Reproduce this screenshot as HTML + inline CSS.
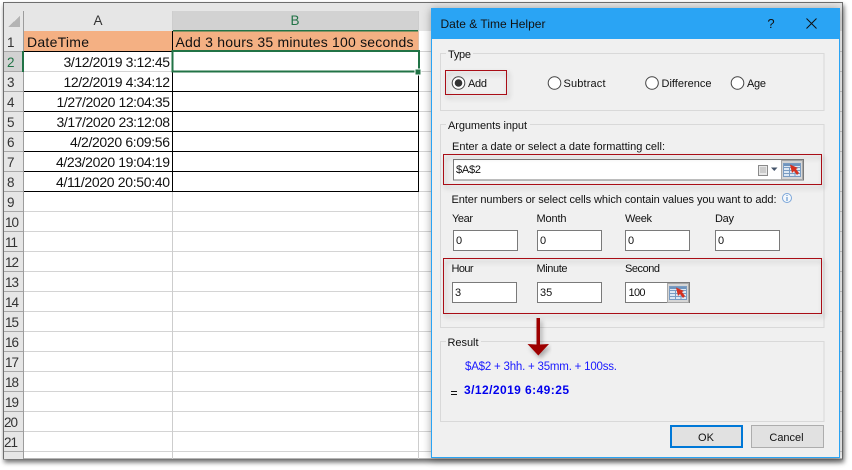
<!DOCTYPE html>
<html><head><meta charset="utf-8"><title>Date &amp; Time Helper</title>
<style>
html,body{margin:0;padding:0;background:#fff;width:852px;height:470px;overflow:hidden}
svg{display:block}
text{font-family:"Liberation Sans",sans-serif;white-space:pre}
.x{font-size:14px;fill:#111}
.r{font-size:13.5px;fill:#333}
.d{font-size:11px;fill:#111}
.b{fill:#111}
</style></head><body>
<svg width="852" height="470" viewBox="0 0 852 470" xmlns="http://www.w3.org/2000/svg" shape-rendering="crispEdges">
<defs>
<filter id="s" x="-10%" y="-30%" width="120%" height="170%"><feDropShadow dx="2" dy="3" stdDeviation="2.5" flood-color="#000" flood-opacity=".3"/></filter>
<filter id="w" x="-3%" y="-3%" width="106%" height="106%"><feDropShadow dx="1" dy="3" stdDeviation="2.5" flood-color="#000" flood-opacity=".55"/></filter>
<filter id="dl" x="-6%" y="-6%" width="112%" height="112%"><feDropShadow dx="0" dy="1" stdDeviation="4.500" flood-color="#000" flood-opacity=".35"/></filter>
<g id="pk">
<rect x=".5" y=".5" width="21" height="19" fill="#d6d6d6" stroke="#a8a8a8"/>
<rect x="2.500" y="3.500" width="17" height="13" fill="#dce8f4" stroke="#7a9cc2"/>
<path d="M3 7.500h16M3 10.500h16M3 13.500h16M8.500 7v10M14 7v10" stroke="#7a9cc2" fill="none"/>
<rect x="3" y="4" width="16" height="2" fill="#6f94bd"/>
<path d="M9 4.500l8 3.500-2 1 3 4-2 2-3-4-2 2z" fill="#d5301f" shape-rendering="auto"/>
</g>
</defs>

<!-- Excel window -->
<rect x="3.500" y="2.500" width="839" height="456.500" fill="#fff" stroke="#6e6e6e" filter="url(#w)"/>
<rect x="4" y="3" width="838" height="8" fill="#e6e6e6"/>
<rect x="4" y="11" width="838" height="20" fill="#e6e6e6"/>
<rect x="4" y="11" width="19" height="448" fill="#e6e6e6"/>
<path d="M20 16V27H8z" fill="#b4b4b4"/>
<rect x="173" y="11" width="245" height="19" fill="#d2d2d2"/>
<rect x="4" y="52" width="19" height="20" fill="#d2d2d2"/>

<!-- grid lines -->
<path d="M24 51.500H842M24 71.500H842M24 91.500H842M24 111.500H842M24 131.500H842M24 151.500H842M24 171.500H842M24 191.500H842M24 211.500H842M24 231.500H842M24 251.500H842M24 271.500H842M24 291.500H842M24 311.500H842M24 331.500H842M24 351.500H842M24 371.500H842M24 391.500H842M24 411.500H842M24 431.500H842M24 451.500H842" stroke="#d4d4d4" fill="none"/>
<path d="M172.500 11V459M418.500 11V459" stroke="#cdcdcd" fill="none"/>
<path d="M4 51.500H23M4 71.500H23M4 91.500H23M4 111.500H23M4 131.500H23M4 151.500H23M4 171.500H23M4 191.500H23M4 211.500H23M4 231.500H23M4 251.500H23M4 271.500H23M4 291.500H23M4 311.500H23M4 331.500H23M4 351.500H23M4 371.500H23M4 391.500H23M4 411.500H23M4 431.500H23M4 451.500H23" stroke="#a8a8a8" fill="none"/>
<path d="M23.500 11V459" stroke="#9c9c9c" fill="none"/>

<!-- fill and borders -->
<rect x="24" y="31" width="394.500" height="20" fill="#f4b083"/>
<path d="M24 51.500H172M24 91.500H419M24 111.500H419M24 131.500H419M24 151.500H419M24 171.500H419M24 191.500H419M172.500 31V192M418.500 72V192" stroke="#000" fill="none"/>
<path d="M173 30.500H418" stroke="#217346" stroke-width="1.500" fill="none"/>
<path d="M23 51V72" stroke="#217346" stroke-width="2" fill="none"/>
<rect x="172.500" y="51" width="246.500" height="20.500" fill="#fff" stroke="#217346" stroke-width="2"/>
<rect x="415" y="69" width="6" height="6" fill="#217346" stroke="#fff" stroke-width=".6"/>

<g shape-rendering="auto">
<text class="r" x="98" y="25" text-anchor="middle">A</text>
<text class="r" x="295" y="25" text-anchor="middle" style="fill:#217346">B</text>
<text class="r" x="7" y="47">1</text>
<text class="r" x="7" y="67" style="fill:#217346">2</text>
<text class="r" x="7" y="87">3</text><text class="r" x="7" y="107">4</text><text class="r" x="7" y="127">5</text><text class="r" x="7" y="147">6</text><text class="r" x="7" y="167">7</text><text class="r" x="7" y="187">8</text><text class="r" x="7" y="207">9</text>
<text class="r" x="5" y="227" textLength="14">10</text><text class="r" x="5" y="247" textLength="13">11</text><text class="r" x="5" y="267" textLength="14">12</text><text class="r" x="5" y="287" textLength="14">13</text><text class="r" x="5" y="307" textLength="14">14</text><text class="r" x="5" y="327" textLength="14">15</text><text class="r" x="5" y="347" textLength="14">16</text><text class="r" x="5" y="367" textLength="14">17</text><text class="r" x="5" y="387" textLength="14">18</text><text class="r" x="5" y="407" textLength="14">19</text><text class="r" x="4" y="427" textLength="14">20</text><text class="r" x="4" y="447" textLength="14">21</text>

<text class="x" x="27" y="47" textLength="62">DateTime</text>
<text class="x" x="175.500" y="47" textLength="238">Add 3 hours 35 minutes 100 seconds</text>
<text class="x" x="63.500" y="67" textLength="106.500">3/12/2019 3:12:45</text>
<text class="x" x="63.500" y="87" textLength="106.500">12/2/2019 4:34:12</text>
<text class="x" x="56.500" y="107" textLength="113.500">1/27/2020 12:04:35</text>
<text class="x" x="56.500" y="127" textLength="113.500">3/17/2020 23:12:08</text>
<text class="x" x="70" y="147" textLength="100">4/2/2020 6:09:56</text>
<text class="x" x="56" y="167" textLength="114">4/23/2020 19:04:19</text>
<text class="x" x="56" y="187" textLength="114">4/11/2020 20:50:40</text>
</g>

<!-- Dialog -->
<rect x="431.500" y="8.500" width="408" height="449" fill="#f0f0f0" stroke="#2aa4f4" filter="url(#dl)"/>
<rect x="431" y="8" width="409" height="31" fill="#2aa4f4"/>
<g shape-rendering="auto">
<text x="440.500" y="28" font-size="12" class="b" textLength="105">Date &amp; Time Helper</text>
<text x="771" y="28" font-size="13" text-anchor="middle" class="b">?</text>
<path d="M806.500 18.500L816.500 28.500M816.500 18.500L806.500 28.500" stroke="#111" stroke-width="1" fill="none"/>
</g>

<!-- groups -->
<rect x="440.500" y="53.500" width="383.500" height="57" fill="none" stroke="#d9d9d9"/>
<rect x="440.500" y="124.500" width="383.500" height="203" fill="none" stroke="#d9d9d9"/>
<rect x="440.500" y="341.500" width="383.500" height="80" fill="none" stroke="#d9d9d9"/>
<rect x="446" y="50" width="27" height="8" fill="#f0f0f0"/>
<rect x="446" y="120" width="84" height="10" fill="#f0f0f0"/>
<rect x="446" y="337" width="35" height="10" fill="#f0f0f0"/>

<g shape-rendering="auto">
<text class="d" x="448" y="58" textLength="23">Type</text>
<text class="d" x="448" y="129" textLength="79">Arguments input</text>
<text class="d" x="447.500" y="346" textLength="31">Result</text>

<circle cx="458.500" cy="83" r="6.300" fill="#fff" stroke="#444"/>
<circle cx="458.500" cy="83" r="3.800" fill="#333"/>
<circle cx="554.500" cy="83" r="6.300" fill="#fff" stroke="#444"/>
<circle cx="652" cy="83" r="6.300" fill="#fff" stroke="#444"/>
<circle cx="737.500" cy="83" r="6.300" fill="#fff" stroke="#444"/>
<text class="d" x="468" y="87" textLength="19">Add</text>
<text class="d" x="563.500" y="87" textLength="42">Subtract</text>
<text class="d" x="661.500" y="87" textLength="50">Difference</text>
<text class="d" x="747" y="87" textLength="19">Age</text>

<text class="d" x="452" y="150" textLength="213">Enter a date or select a date formatting cell:</text>
<text class="d" x="451.500" y="203" textLength="325">Enter numbers or select cells which contain values you want to add:</text>
<circle cx="787" cy="198" r="4.500" fill="#f4f8fc" stroke="#7da7d9"/>
<path d="M787 197v4M787 195v1" stroke="#4a86c8" fill="none"/>
<text class="d" x="452" y="222" textLength="21">Year</text>
<text class="d" x="536.500" y="222" textLength="30">Month</text>
<text class="d" x="625" y="222" textLength="27">Week</text>
<text class="d" x="715" y="222" textLength="19">Day</text>
<text class="d" x="451.500" y="272" textLength="22">Hour</text>
<text class="d" x="536.500" y="272" textLength="31">Minute</text>
<text class="d" x="625" y="272" textLength="35">Second</text>
</g>

<!-- inputs -->
<g fill="#fff" stroke="#7a7a7a" stroke-width="1.300">
<rect x="453.500" y="159.500" width="350" height="20.500"/>
<rect x="453.500" y="230.500" width="64" height="20"/>
<rect x="537.500" y="230.500" width="64" height="20"/>
<rect x="625.500" y="230.500" width="64" height="20"/>
<rect x="715.500" y="230.500" width="64" height="20"/>
<rect x="452.500" y="282.500" width="64" height="20"/>
<rect x="537.500" y="282.500" width="64" height="20"/>
<rect x="625.500" y="282.500" width="64" height="20"/>
</g>
<g shape-rendering="auto">
<text class="d" x="456" y="173" textLength="25">$A$2</text>
<text class="d" x="456" y="244">0</text><text class="d" x="540" y="244">0</text><text class="d" x="628" y="244">0</text><text class="d" x="718" y="244">0</text>
<text class="d" x="455" y="296">3</text><text class="d" x="540" y="296">35</text><text class="d" x="628.500" y="296" textLength="17">100</text>
</g>

<!-- icons -->
<rect x="758.500" y="165.500" width="9" height="10" fill="#e8e8e8" stroke="#8a8a8a"/>
<path d="M760 168h6M760 170h6M760 172h6" stroke="#b0b0b0" fill="none"/>
<path d="M771 167.500h6.500l-3.200 3.500z" fill="#44546a" shape-rendering="auto"/>
<use href="#pk" x="781" y="160"/>
<use href="#pk" x="667" y="283"/>

<!-- red highlights -->
<g fill="none" stroke="#a90f17" stroke-width="1" filter="url(#s)">
<rect x="445.500" y="70.500" width="61" height="24"/>
<rect x="443.500" y="154.500" width="378" height="30"/>
<rect x="443.500" y="258.500" width="378" height="55"/>
</g>

<!-- arrow -->
<path d="M536.500 318H540V344.500L549 344L538.300 355.500L527.500 344L536.500 344.500Z" fill="#9d0505" filter="url(#s)" shape-rendering="auto"/>

<!-- result -->
<g shape-rendering="auto">
<text x="465" y="370" font-size="11.500" style="fill:#1a1aff" textLength="152">$A$2 + 3hh. + 35mm. + 100ss.</text>
<text x="464" y="394" font-size="12" font-weight="700" style="fill:#0000ee" textLength="105">3/12/2019 6:49:25</text>
</g>
<path d="M451 391.500h6M451 394.500h6" stroke="#111" fill="none"/>

<!-- buttons -->
<rect x="671" y="426" width="71" height="21" fill="#e1e1e1" stroke="#0078d7" stroke-width="2"/>
<rect x="751.500" y="425.500" width="72" height="22" fill="#e1e1e1" stroke="#adadad"/>
<g shape-rendering="auto">
<text class="d" x="706" y="441" text-anchor="middle">OK</text>
<text class="d" x="786.500" y="441" text-anchor="middle">Cancel</text>
</g>
</svg>
</body></html>
